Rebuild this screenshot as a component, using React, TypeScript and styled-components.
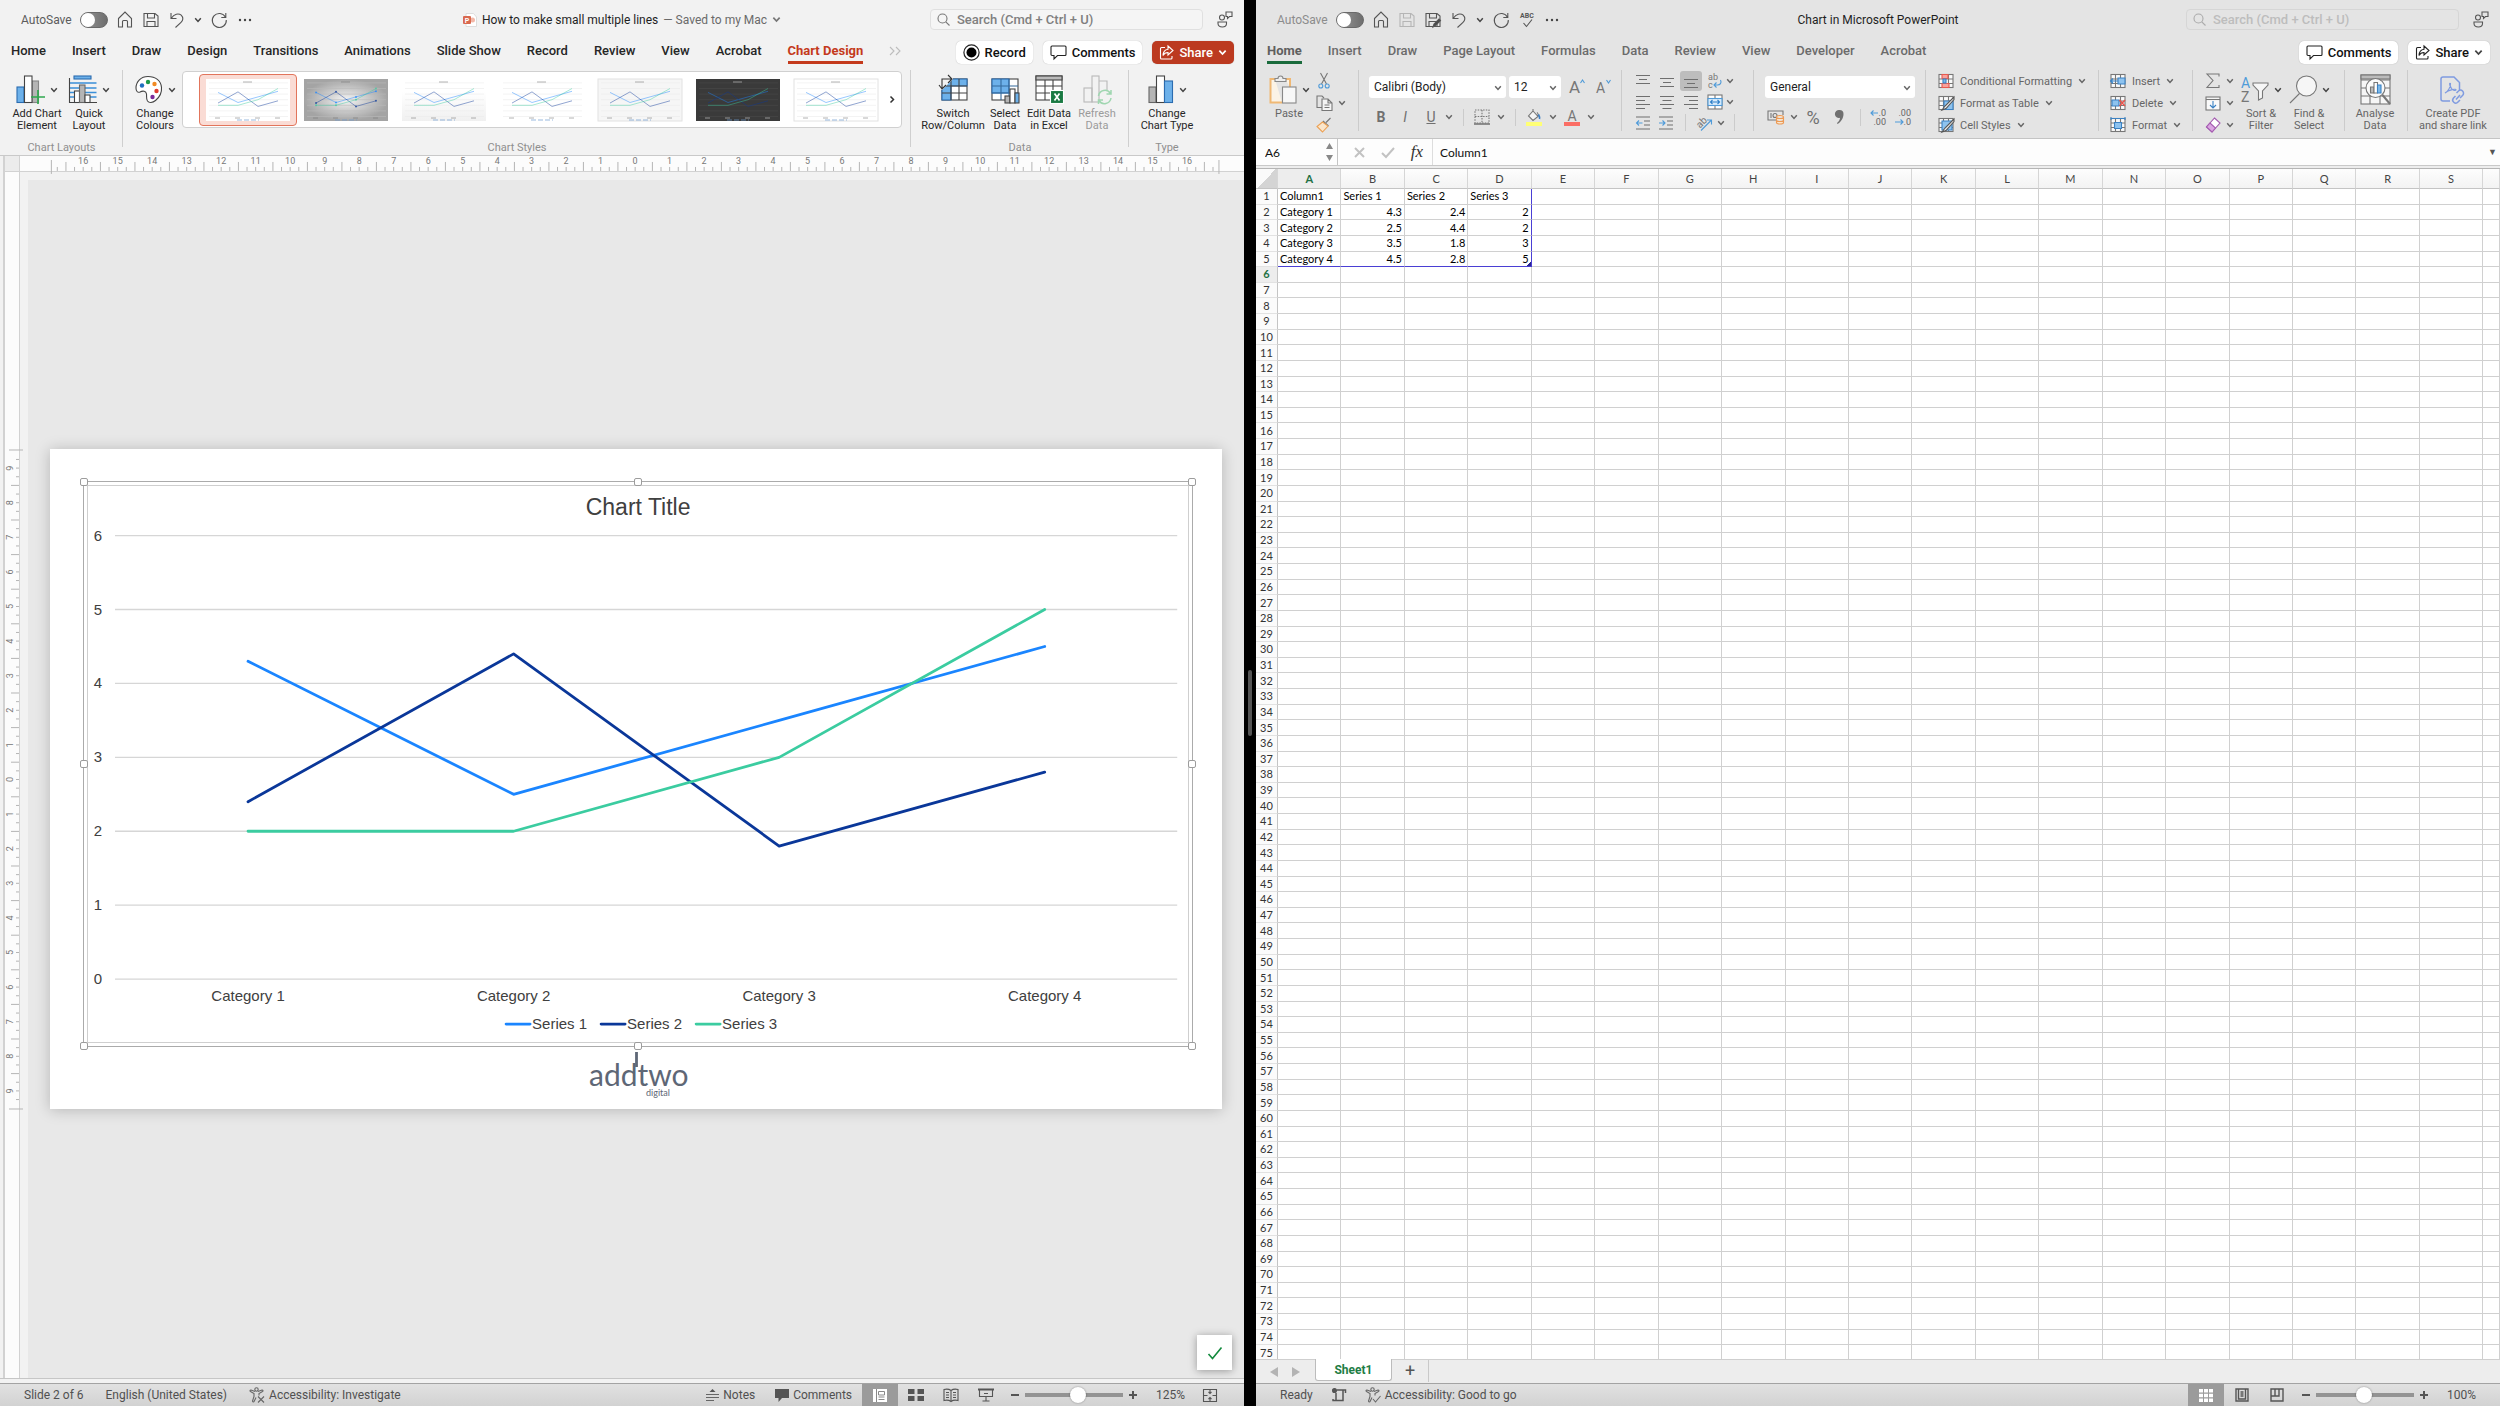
import React from 'react';
import styled, { createGlobalStyle, css } from 'styled-components';

const UI = `Roboto, "Liberation Sans", sans-serif`;
const SHEET = `Lato, "Liberation Sans", sans-serif`;
const ARIAL = `"Liberation Sans", Arial, sans-serif`;

const GlobalStyle = createGlobalStyle`
  *, *::before, *::after { box-sizing: border-box; }
  html, body { margin: 0; padding: 0; background: #000; }
  body { font-family: ${UI}; font-size: 12px; color: #262626; }
  button, input, select { font: inherit; color: inherit; margin: 0; }
  button { background: none; border: 0; padding: 0; cursor: pointer; }
  svg { display: block; flex: none; overflow: visible; }
`;

/* ---------- data ---------- */

const SERIES = [
  { name: 'Series 1', color: '#1a85ff', values: [4.3, 2.5, 3.5, 4.5] },
  { name: 'Series 2', color: '#0a3799', values: [2.4, 4.4, 1.8, 2.8] },
  { name: 'Series 3', color: '#3bcca0', values: [2, 2, 3, 5] },
];
const CATEGORIES = ['Category 1', 'Category 2', 'Category 3', 'Category 4'];
const COLUMNS = 'ABCDEFGHIJKLMNOPQRS'.split('');
const ROW_COUNT = 75;

const cellAt = (row: number, col: number): string => {
  if (row === 1) return ['Column1', ...SERIES.map((s) => s.name)][col] ?? '';
  if (row > 5 || col > 3) return '';
  return col === 0 ? CATEGORIES[row - 2] : String(SERIES[col - 1].values[row - 2]);
};

/* ---------- shared parts ---------- */

const Screen = styled.div`
  display: grid;
  grid-template-columns: minmax(0, 1fr) 12px minmax(0, 1fr);
  height: 100vh;
`;

const Divider = styled.div`
  display: flex;
  align-items: center;
  justify-content: center;
  background: #000;
  &::after { content: ''; width: 4px; height: 66px; border-radius: 2px; background: #555; }
`;

const Pane = styled.section<{ $bg: string }>`
  display: flex;
  flex-direction: column;
  min-height: 0;
  overflow: hidden;
  background: ${(p) => p.$bg};
`;

const TitleBar = styled.header`
  display: grid;
  grid-template-columns: 1fr auto 1fr;
  align-items: center;
  height: 39px;
  padding: 0 11px;
`;

const QuickAccess = styled.div`
  display: flex;
  align-items: center;
  gap: 9px;
  padding-left: 10px;
`;

const AutoSave = styled.label<{ $dim?: boolean }>`
  display: flex;
  align-items: center;
  gap: 8px;
  color: ${(p) => (p.$dim ? '#8c8c8c' : '#5c5c5c')};
`;

const Toggle = styled.input`
  appearance: none;
  width: 28px;
  height: 16px;
  border: 1px solid #6a6a6a;
  border-radius: 8px;
  background: linear-gradient(90deg, #9a9a9a, #6e6e6e);
  &::before {
    content: '';
    display: block;
    width: 14px;
    height: 14px;
    border-radius: 50%;
    background: #fff;
  }
`;

const Plain = styled.button<{ $w?: number; $h?: number; $on?: boolean }>`
  display: flex;
  align-items: center;
  justify-content: center;
  flex: none;
  width: ${(p) => (p.$w ? `${p.$w}px` : 'auto')};
  height: ${(p) => p.$h ?? 20}px;
  border-radius: 3px;
  background: ${(p) => (p.$on ? '#bdbdbd' : 'none')};
`;

const DocTitle = styled.h1`
  display: flex;
  align-items: center;
  gap: 5px;
  margin: 0;
  font-size: 12px;
  font-weight: 400;
  color: #1f1f1f;
  span { color: #6a6a6a; }
`;

const TitleEnd = styled.div`
  display: flex;
  align-items: center;
  justify-content: flex-end;
  gap: 14px;
`;

const SearchBox = styled.label<{ $dim?: boolean }>`
  display: flex;
  align-items: center;
  gap: 7px;
  width: 273px;
  height: 21px;
  padding: 0 6px;
  border: 1px solid ${(p) => (p.$dim ? '#d6d6d6' : '#e0e0e0')};
  border-radius: 4px;
  background: ${(p) => (p.$dim ? '#e4e4e4' : '#f5f5f5')};
  input {
    flex: 1;
    min-width: 0;
    padding: 0;
    border: 0;
    outline: 0;
    background: none;
    font-size: 13px;
    font-weight: 500;
  }
  input::placeholder { color: ${(p) => (p.$dim ? '#bdbdbd' : '#808080')}; opacity: 1; }
`;

const TabRow = styled.nav`
  display: flex;
  justify-content: space-between;
  align-items: flex-start;
  height: 31px;
  padding: 0 10px 0 11px;
`;

const Tabs = styled.div`
  display: flex;
  gap: 26px;
  padding-top: 1px;
`;

const Tab = styled.button<{ $active?: string; $dim?: boolean }>`
  height: 24px;
  border-bottom: 3px solid transparent;
  font-size: 13px;
  font-weight: 500;
  line-height: 21px;
  white-space: nowrap;
  color: ${(p) => (p.$dim ? '#6b6b6b' : '#262626')};
  ${(p) =>
    p.$active &&
    css`
      font-weight: 700;
      border-bottom-color: ${p.$active};
      color: ${p.$dim ? '#5f5f5f' : p.$active};
    `}
`;

const Actions = styled.div`
  display: flex;
  gap: 10px;
  padding-top: 2px;
`;

const Action = styled.button<{ $primary?: boolean }>`
  display: flex;
  align-items: center;
  gap: 5px;
  height: 23px;
  padding: 0 7px;
  border-radius: 5px;
  font-size: 13px;
  font-weight: 500;
  background: ${(p) => (p.$primary ? '#bc3a20' : '#fff')};
  color: ${(p) => (p.$primary ? '#fff' : '#111')};
  box-shadow: 0 0 1px rgba(0, 0, 0, 0.3);
`;

const Big = styled.button<{ $w: number; $color?: string }>`
  display: flex;
  flex-direction: column;
  align-items: center;
  gap: 4px;
  flex: none;
  width: ${(p) => p.$w}px;
  padding-top: 5px;
  font-size: 11px;
  line-height: 12px;
  white-space: nowrap;
  color: ${(p) => p.$color ?? '#262626'};
`;

const BigArt = styled.span`
  display: flex;
  align-items: center;
  justify-content: center;
  gap: 5px;
  height: 29px;
`;

/* ---------- icons ---------- */

type Art = { w: number; h: number; children: React.ReactNode; stroke?: string };
const Ico = ({ w, h, children, stroke = '#555' }: Art) => (
  <svg width={w} height={h} viewBox={`0 0 ${w} ${h}`} fill="none" stroke={stroke} strokeWidth="1.1" aria-hidden="true">
    {children}
  </svg>
);

const Chevron = ({ c = '#444', w = 8 }: { c?: string; w?: number }) => (
  <svg width={w} height={w - 2} viewBox="0 0 8 6" fill="none" stroke={c} strokeWidth="1.5" aria-hidden="true">
    <path d="M1.2 1.3 4 4.4 6.8 1.3" />
  </svg>
);

const HomeIcon = () => (
  <Ico w={16} h={17}>
    <path d="M1.5 7.5 8 1l6.500 6.500V16H10.500V10.500a1 1 0 0 0-1-1h-3a1 1 0 0 0-1 1V16h-4z" />
  </Ico>
);
const SaveIcon = ({ c = '#555', pen = false }: { c?: string; pen?: boolean }) => (
  <Ico w={16} h={16} stroke={c}>
    <path d="M1 1.500h11L15 4v10.500H1zM4.500 1.500v4.500h7V1.500M4 14.500V9.500h8v5" />
    {pen && <path d="M8 15l1-3 5-5 1.500 1.500-5 5z" fill="#444" />}
  </Ico>
);
const UndoIcon = () => (
  <Ico w={14} h={16}>
    <path d="M1 1v5.500h5.500M1.500 6C4 2 8.500.8 11.200 3.200c2.600 2.500 1.800 5.300-.2 7.200L5.500 15.500" />
  </Ico>
);
const RedoIcon = () => (
  <Ico w={17} h={16}>
    <path d="M14.800 1v4.500h-4.500M14.500 5.200A7 7 0 1 0 15.300 8" />
  </Ico>
);
const Dots = () => (
  <svg width="14" height="4" viewBox="0 0 14 4" fill="#444" aria-hidden="true">
    <circle cx="2" cy="2" r="1.200" /><circle cx="7" cy="2" r="1.200" /><circle cx="12" cy="2" r="1.200" />
  </svg>
);
const SpellIcon = () => (
  <Ico w={16} h={16}>
    <text x="8" y="6" textAnchor="middle" fontSize="7" fontWeight="700" fontFamily={UI} fill="#555" stroke="none">ABC</text>
    <path d="M4.500 11l3 3.500L13 7.500" />
  </Ico>
);
const SearchIcon = ({ c = '#777' }: { c?: string }) => (
  <Ico w={13} h={13} stroke={c}><circle cx="5.500" cy="5.500" r="4.500" /><path d="M8.800 8.800 12.500 12.500" /></Ico>
);
const PersonIcon = () => (
  <Ico w={16} h={17}>
    <circle cx="5" cy="6.500" r="2.500" />
    <path d="M1 11h8.500v1.500c0 2.300-1.700 3.500-4.200 3.500S1 14.800 1 12.500z" />
    <path d="M9 1h6v4.500h-2.500L10.500 7.500V5.500H9z" />
  </Ico>
);
const CommentIcon = () => (
  <Ico w={17} h={15} stroke="#222"><path d="M2 1h13a1 1 0 0 1 1 1v7.500a1 1 0 0 1-1 1H7.500L4 14v-3.500H2a1 1 0 0 1-1-1V2a1 1 0 0 1 1-1z" /></Ico>
);
const ShareIcon = ({ c }: { c: string }) => (
  <Ico w={15} h={15} stroke={c}>
    <path d="M6 2.500H2.500a1 1 0 0 0-1 1V13a1 1 0 0 0 1 1H12a1 1 0 0 0 1-1v-2" />
    <path d="M9 1l5 4.500-5 4.500V7.500C6.500 7.500 5 8.500 4 10.500c.2-4 2.200-6 5-6.300z" />
  </Ico>
);
const RecordIcon = () => (
  <svg width="17" height="17" viewBox="0 0 17 17" aria-hidden="true">
    <circle cx="8.500" cy="8.500" r="7.600" fill="none" stroke="#222" strokeWidth="1.200" /><circle cx="8.500" cy="8.500" r="5" fill="#000" />
  </svg>
);
const PptFile = () => (
  <svg width="14" height="14" viewBox="0 0 14 14" aria-hidden="true">
    <path d="M3 .5h7.500L13.500 4v9.500H3z" fill="#fff" stroke="#ddd" />
    <circle cx="9.500" cy="7" r="2.500" fill="#f2b8a8" /><rect x="0" y="3" width="8" height="8" rx="1" fill="#d9694f" />
    <text x="4" y="9.500" textAnchor="middle" fontSize="7" fontWeight="700" fontFamily={UI} fill="#fff">P</text>
  </svg>
);

const AddChartArt = () => (
  <Ico w={29} h={29}>
    <rect x="1" y="12" width="7" height="15.500" fill="#6db1ea" stroke="#2b6cb0" />
    <rect x="16" y="6" width="6.500" height="21.500" fill="#b5b5b5" stroke="#888" />
    <rect x="8.500" y="1" width="7.500" height="26.500" fill="#fff" stroke="#444" />
    <path d="M22 15v14M15 22h14" stroke="#2fa84f" strokeWidth="1.700" />
  </Ico>
);
const QuickLayoutArt = () => (
  <Ico w={29} h={29}>
    <rect x="6" y="1" width="17" height="3" fill="#6db1ea" stroke="#2b6cb0" />
    <path d="M1.500 8h27M1.500 13h27M1.500 17.500h27M1.500 22h27" stroke="#3a8fd8" strokeWidth="1.400" />
    <path d="M1.500 3v24.500H29" stroke="#444" />
    <rect x="6.500" y="16" width="5" height="11.500" fill="#fff" stroke="#444" />
    <rect x="11.500" y="10" width="5.500" height="17.500" fill="#b5b5b5" stroke="#666" />
    <rect x="17" y="20" width="5" height="7.500" fill="#fff" stroke="#444" />
  </Ico>
);
const PaletteArt = () => (
  <Ico w={28} h={29} stroke="#444">
    <path d="M13 1.500C6 1.500 1 6.500 1 13c0 3 1.500 5 4 4 3-1.500 6-1 6.500 2 .3 3-.5 4.500 1 7 1.500 2 5 2 8-.5 4-3.300 6.500-7.500 6-13C26 5.500 20.500 1.500 13 1.500z" fill="#fff" />
    <g stroke="none">
      <circle cx="7" cy="10.500" r="2.200" fill="#1f6fc0" /><circle cx="13" cy="7" r="2.200" fill="#1d9a4b" />
      <circle cx="19.500" cy="9" r="2.200" fill="#f08a24" /><circle cx="21.500" cy="16" r="2.200" fill="#e03c31" />
      <circle cx="17.500" cy="22" r="2.200" fill="#7b2a9b" />
    </g>
  </Ico>
);
const SwitchArt = () => (
  <Ico w={29} h={29} stroke="#444">
    <rect x="3" y="4" width="25" height="21" fill="#fff" />
    <path d="M3 4h25v7H12v14H3z" fill="#6db1ea" stroke="#2b6cb0" />
    <path d="M3 11h25M3 18h25M12 4v21M20 4v21" />
    <path d="M0 14V1H14V4L3 15z" fill="#f2f2f2" stroke="none" />
    <path d="M3 13V4h9M9 0l4 4-4 4M0 10l3 4 4-4" stroke="#333" />
  </Ico>
);
const SelectArt = () => (
  <Ico w={29} h={29} stroke="#444">
    <rect x="1" y="4" width="26" height="21" fill="#fff" />
    <rect x="1" y="4" width="17" height="14" fill="#6db1ea" stroke="#2b6cb0" />
    <path d="M1 11h26M1 18h26M10 4v21M18 4v21" stroke="#356a9c" />
    <rect x="14" y="21" width="5" height="7" fill="#b5b5b5" /><rect x="19" y="14" width="5" height="14" fill="#fff" /><rect x="24" y="18" width="4" height="10" fill="#6db1ea" />
  </Ico>
);
const EditExcelArt = () => (
  <Ico w={29} h={29} stroke="#444">
    <rect x="1" y="1" width="26" height="24" fill="#fff" /><rect x="1" y="1" width="26" height="4" fill="#bbb" />
    <path d="M1 11h26M1 18h26M10 5v20M18 5v20" />
    <rect x="15.500" y="15.500" width="13" height="13" fill="#1a7a43" stroke="#fff" />
    <path d="M19.500 18.500l5 7M24.500 18.500l-5 7" stroke="#fff" strokeWidth="1.700" />
  </Ico>
);
const RefreshArt = () => (
  <Ico w={29} h={29} stroke="#b9b9b9">
    <rect x="1" y="13" width="8" height="14" /><rect x="9" y="1" width="7" height="26" /><path d="M16 6h8v9" />
    <path d="M15.500 21a6.500 6.500 0 0 1 12-2.500M28 15v4h-4.500M28 23a6.500 6.500 0 0 1-12 2.500M15.500 29v-4H20" stroke="#9fd6b0" strokeWidth="1.500" />
  </Ico>
);
const ChartTypeArt = () => (
  <Ico w={26} h={29}>
    <rect x="1" y="12" width="7" height="15.500" fill="#b5b5b5" stroke="#666" />
    <rect x="8.500" y="1" width="8" height="26.500" fill="#fff" stroke="#444" />
    <rect x="16.500" y="6" width="8" height="21.500" fill="#6db1ea" stroke="#2b6cb0" />
  </Ico>
);

const PasteArt = () => (
  <Ico w={28} h={29} stroke="#888">
    <path d="M6 4H1.500v23.500H13M16 4h5v8" stroke="#f0b873" strokeWidth="2" fill="#fbf3e6" />
    <path d="M6 6.500V3.500h3a2.500 2.500 0 0 1 5 0h3v3z" fill="#eee" />
    <rect x="13.500" y="12" width="13.500" height="16" fill="#f7f7f7" />
  </Ico>
);
const CutIcon = () => (
  <Ico w={16} h={16} stroke="#777"><path d="M4.500 0l6 11M11.500 0l-6 11" /><g stroke="#4f9bd9"><circle cx="4.800" cy="13" r="2" /><circle cx="11.200" cy="13" r="2" /></g></Ico>
);
const CopyIcon = () => (
  <Ico w={17} h={16} stroke="#777">
    <path d="M6 12.500H1V1h5l2 2" /><path d="M6 4h6l4 4v7.500H6zM12 4v4h4M8.500 10h5M8.500 12.500h5" fill="#f4f4f4" />
  </Ico>
);
const BrushIcon = () => (
  <Ico w={16} h={16} stroke="#777"><path d="M14.500 1L10 5.500M7 4l5.500 5" /><path d="M6.500 5L1 9.500l5.500 5.500L12 9z" stroke="#eca154" fill="#fbe6cb" /></Ico>
);
const GrowIcon = ({ up }: { up?: boolean }) => (
  <Ico w={18} h={18} stroke="#4f9bd9">
    <text x="1" y="15" fontSize={up ? 17 : 14} fontFamily={UI} fill="#777" stroke="none">A</text>
    <path d={up ? 'M12.500 5l2-3 2 3' : 'M11.500 2l2 3 2-3'} />
  </Ico>
);
const BordersIcon = () => (
  <Ico w={16} h={16} stroke="#777"><path d="M1 1h14v13H1zM8 1v13M1 7.500h14" strokeDasharray="1.500 1.200" /><path d="M0 15h16" strokeWidth="1.600" /></Ico>
);
const FillIcon = () => (
  <Ico w={16} h={17} stroke="#777">
    <path d="M7 2l5 5.500-5 4-4.500-4.500zM7 2V0M12 7c1-2-.5-3-1-3.500" fill="#f4f4f4" /><path d="M12.500 5.500c1 1.800 1.500 3 1 4.500" stroke="#3b7ec4" strokeWidth="1.600" />
    <rect x="0" y="13" width="16" height="4" fill="#ffff76" stroke="none" />
  </Ico>
);
const FontColorIcon = () => (
  <Ico w={16} h={17}>
    <text x="8" y="11.500" textAnchor="middle" fontSize="14" fontFamily={UI} fill="#777" stroke="none">A</text>
    <rect x="0" y="13" width="16" height="4" fill="#fb6e65" stroke="none" />
  </Ico>
);
const Lines = ({ d }: { d: string }) => <Ico w={14} h={16} stroke="#6f6f6f"><path d={d} /></Ico>;
const WrapIcon = () => (
  <Ico w={16} h={16} stroke="#4f9bd9">
    <g fontSize="9" fontFamily={UI} fill="#777" stroke="none"><text x="1" y="7">ab</text><text x="1" y="15">c</text></g>
    <path d="M13.500 7c1.500 3-.5 5-3 5H7M9.500 9.500L7 12l2.500 2.500" />
  </Ico>
);
const MergeIcon = () => (
  <Ico w={16} h={16} stroke="#777">
    <rect x="1" y="1" width="14" height="14" fill="#fff" /><path d="M8 1v14" /><rect x="1" y="4.500" width="14" height="7" fill="#d8ebfa" stroke="#4f9bd9" />
    <path d="M4 8h8M5.500 6L3.500 8l2 2M10.500 6l2 2-2 2" stroke="#2f80c9" />
  </Ico>
);
const IndentIcon = ({ out }: { out?: boolean }) => (
  <Ico w={14} h={16} stroke="#6f6f6f">
    <path d="M0 2h14M8 6h6M8 10h6M0 14h14" /><path d={out ? 'M6.500 8h-6M3 5.500L.5 8 3 10.500' : 'M0 8h6M3.500 5.500L6 8l-2.500 2.500'} stroke="#4f9bd9" />
  </Ico>
);
const OrientIcon = () => (
  <Ico w={18} h={18} stroke="#4f9bd9">
    <text x="1" y="13" transform="rotate(-45 5 9)" fontSize="10" fontFamily={UI} fill="#777" stroke="none">ab</text>
    <path d="M6 16.500L16 6.500M12 6h4.500v4.500" />
  </Ico>
);
const MoneyIcon = () => (
  <Ico w={18} h={16} stroke="#777">
    <path d="M10 11H1V2h15v4" /><circle cx="8" cy="6.500" r="2" /><path d="M4 4v5" />
    <path d="M9.500 8c0-2 7-2 7 0v5.500c0 2-7 2-7 0zM9.500 8c0 2 7 2 7 0M9.500 11c0 2 7 2 7 0" stroke="#ec9a56" fill="#fbe6cb" />
  </Ico>
);
const DecimalIcon = ({ inc }: { inc?: boolean }) => (
  <Ico w={17} h={17} stroke="#4f9bd9">
    <g fontSize="9" fontFamily={UI} fill="#666" stroke="none">
      <text x="16" y="7" textAnchor="end">{inc ? '.0' : '.00'}</text><text x="16" y="16" textAnchor="end">{inc ? '.00' : '.0'}</text>
    </g>
    <path d={inc ? 'M8 4H1M3.500 1.500L1 4l2.500 2.500' : 'M0 13h8M5.500 10.500L8 13l-2.500 2.500'} />
  </Ico>
);
const GridIcon = ({ kind }: { kind: string }) => (
  <Ico w={16} h={16} stroke="#777">
    <rect x="1" y="1.500" width="14" height="13" fill="#fafafa" /><path d="M5.500 1.500v13M10.500 1.500v13M1 6h14M1 10.500h14" />
    {kind === 'cond' && <path d="M4 1.500h6v4H4zM4 10.500h7v4H4z" fill="#f7a29c" stroke="#ea5a50" />}
    {kind === 'cond' && <rect x="5" y="6" width="3" height="4" fill="#7db9ea" stroke="#3b82c4" />}
    {kind === 'table' && <path d="M6 6h9v8.500H6z" fill="#8ec3ef" stroke="#3b82c4" />}
    {kind === 'styles' && <path d="M4 4h10v9H4z" fill="#8ec3ef" stroke="#3b82c4" />}
    {(kind === 'table' || kind === 'styles') && <path d="M16 2L7 11l-3 4 4-1.500 8-9z" fill="#eee" stroke="#555" />}
    {kind === 'insert' && <path d="M8 5h7v6H8zM8 8H0M3 5.500L.5 8 3 10.500" fill="#8ec3ef" stroke="#3b82c4" />}
    {kind === 'delete' && <path d="M2 5h7v6H2z" fill="#8ec3ef" stroke="#3b82c4" />}
    {kind === 'delete' && <path d="M9.500 5l5.500 6M15 5l-5.500 6" stroke="#e8534a" strokeWidth="1.400" />}
    {kind === 'format' && <path d="M4.500 5.500h7v6h-7zM1 0v3M15 0v3M1 1.500h14" fill="#8ec3ef" stroke="#3b82c4" />}
  </Ico>
);
const SumIcon = () => <Ico w={16} h={16} stroke="#777"><path d="M14 3.500V1H2l6 6.500L2 14.500h12V12" /></Ico>;
const FillDownIcon = () => (
  <Ico w={16} h={15} stroke="#777"><rect x="1" y="1" width="14" height="13" fill="#fafafa" /><path d="M1 3.500h14" /><path d="M8 5v7M5 9l3 3 3-3" stroke="#3b82c4" /></Ico>
);
const EraserIcon = () => (
  <Ico w={16} h={16} stroke="#a45bb0"><path d="M9.500 1L15 6l-8 9-5.500-5z" fill="#fff" /><path d="M5 6l5.500 5L7 15 1.500 10z" fill="#dba6e2" /></Ico>
);
const SortArt = () => (
  <Ico w={28} h={28} stroke="#777">
    <g fontSize="14" fontFamily={UI} stroke="none"><text x="0" y="12" fill="#4f9bd9">A</text><text x="0" y="26" fill="#777">Z</text></g>
    <path d="M12 7h15v2l-5.500 6v7l-4 2v-9L12 9z" fill="#f6f6f6" />
  </Ico>
);
const FindArt = () => <Ico w={28} h={29} stroke="#777"><circle cx="17.500" cy="11" r="10" fill="#f6f6f6" /><path d="M10.500 18.500L1 28" /></Ico>;
const AnalyseArt = () => (
  <Ico w={31} h={31} stroke="#777">
    <rect x="1" y="1" width="29" height="29" fill="#f6f6f6" /><path d="M1 6h29M1 14h29M1 22h29M10 6v24M20 6v24" /><rect x="1" y="1" width="29" height="4" fill="#bbb" />
    <circle cx="15.500" cy="14" r="9.500" fill="#fafafa" /><path d="M22.500 21L30 30" strokeWidth="2" />
    <path d="M10.500 13h3.500v6h-3.500z" fill="#bbb" /><path d="M14 8.500h3.500V19H14z" fill="#fff" /><path d="M17.500 11H21v8h-3.500z" fill="#7db9ea" stroke="#3b82c4" />
  </Ico>
);
const PdfArt = () => (
  <Ico w={26} h={28} stroke="#7f9be0">
    <path d="M10 25H3a2 2 0 0 1-2-2V3a2 2 0 0 1 2-2h11l5.500 5.500V14" strokeWidth="1.500" />
    <path d="M5 17c3-1 6-7 5.500-9.500-1.500-1.500-1 3 1 5 1.500 2 4 2.500 4.500 1.500.5-1.500-7-.5-11 3z" />
    <path d="M15.500 20l-2 2a3 3 0 0 0 4.500 4l2-2M20 22l2.500-2.500a3 3 0 0 0-4-4.500l-2 2M16 23.500l4-4.500" strokeWidth="1.500" />
  </Ico>
);

const A11yIcon = ({ ok }: { ok?: boolean }) => (
  <Ico w={16} h={16} stroke="#666">
    <circle cx="7.500" cy="2.500" r="1.700" />
    <path d="M6 4.500L2 3c-1.200 0-1.300 1-.5 1.500L5 6.500v3L3.500 14c0 1.200 1.300 1.200 1.700.3L7 10.500M9 4.500l4-1.500c1.200 0 1.300 1 .5 1.500L10 6.500v2" />
    <path d={ok ? 'M8 12l2.500 3L15.500 9' : 'M9 9.500l6 6M15 9.500l-6 6'} />
  </Ico>
);

/* ---------- ribbon of the slides window ---------- */

const SlideRibbon = styled.div`
  display: flex;
  height: 86px;
  padding-right: 39px;
  border-bottom: 1px solid #c9c9c9;
`;

const Group = styled.div<{ $w?: number; $last?: boolean }>`
  display: flex;
  flex-direction: column;
  justify-content: space-between;
  flex: ${(p) => (p.$w ? 'none' : '1')};
  width: ${(p) => (p.$w ? `${p.$w}px` : 'auto')};
  min-width: 0;
  background: ${(p) => (p.$last ? 'none' : 'linear-gradient(#cfcfcf, #cfcfcf) right top / 1px 77px no-repeat')};
`;

const GroupItems = styled.div<{ $pad: number }>`
  display: flex;
  padding: 0 ${(p) => p.$pad}px;
`;

const GroupName = styled.div`
  text-align: center;
  font-size: 11px;
  line-height: 15px;
  color: #8f8f8f;
`;

const Gallery = styled.div`
  display: flex;
  align-items: center;
  flex: 1;
  height: 57px;
  margin: 1px 0 0 4px;
  padding-left: 16px;
  border: 1px solid #d0d0d0;
  border-radius: 4px;
  background: #fff;
`;

const ThumbButton = styled.button<{ $on?: boolean }>`
  display: flex;
  align-items: center;
  justify-content: center;
  width: 98px;
  height: 52px;
  border-radius: 4px;
  ${(p) => p.$on && css`
    border: 1px solid #e2755c;
    background: #fadcd5;
  `}
`;

const THUMBS = [
  { bg: '#fff' },
  { bg: 'radial' },
  { bg: 'fade' },
  { bg: '#fff' },
  { bg: '#f6f6f6' },
  { bg: '#3a3a3a' },
  { bg: '#fff', frame: true },
];

const Thumb = ({ bg, frame }: { bg: string; frame?: boolean }) => {
  const dark = bg === '#3a3a3a';
  const metal = bg === 'radial';
  const fill = metal ? 'url(#thumbRadial)' : bg === 'fade' ? 'url(#thumbFade)' : bg;
  const ink = dark ? '#ddd' : '#777';
  return (
    <svg width="84" height="42" viewBox="0 0 84 42" aria-hidden="true">
      <defs>
        <radialGradient id="thumbRadial"><stop offset="0" stopColor="#f4f4f4" /><stop offset="1" stopColor="#a4a4a4" /></radialGradient>
        <linearGradient id="thumbFade" x2="0" y2="1"><stop offset="0.3" stopColor="#fff" /><stop offset="1" stopColor="#f0f0f0" /></linearGradient>
      </defs>
      <rect width="84" height="42" fill={fill} stroke={frame || bg === '#f6f6f6' ? '#e2e2e2' : 'none'} />
      {[0, 1, 2, 3, 4, 5, 6].map((v) => (
        <path key={v} d={`M3 ${37.5 - v * 5.6}H82`} stroke={dark ? '#4a4a4a' : metal ? '#b8b8b8' : '#ebebeb'} strokeWidth="0.600" />
      ))}
      {SERIES.map((s) => (
        <polyline key={s.name} fill="none" stroke={s.color} strokeWidth="0.900" opacity="0.500"
          points={s.values.map((v, i) => `${12 + i * 20},${37.5 - v * 5.6}`).join(' ')} />
      ))}
      {metal && SERIES.map((s) => s.values.map((v, i) => (
        <circle key={s.name + i} cx={12 + i * 20} cy={37.5 - v * 5.6} r="1" fill={s.color} opacity="0.700" />
      )))}
      <path d="M37 3h9M9 39h5M29 39h5M49 39h5M69 39h5" stroke={ink} strokeWidth="0.800" opacity="0.700" />
      <path d="M31 41h22" stroke="#6d9bd0" strokeWidth="0.700" strokeDasharray="5 2" />
    </svg>
  );
};

/* ---------- slide work area ---------- */

const WorkArea = styled.main`
  position: relative;
  display: grid;
  grid-template-columns: 3px 17px 8px minmax(0, 1fr);
  grid-template-rows: 16px 8px minmax(0, 1fr);
  flex: 1;
  min-height: 0;
  border-bottom: 1px solid #c6c6c6;
`;

const RulerCorner = styled.div`
  grid-area: 1 / 2;
  border: solid #d2d2d2;
  border-width: 0 1px 1px 2px;
  background: #ececec;
`;

const TopRuler = styled.div`
  grid-area: 1 / 3 / 3 / 5;
  display: flex;
  justify-content: center;
  padding-left: 7px;
  background: linear-gradient(#fcfcfc 15px, #d2d2d2 15px, #d2d2d2 16px, #f2f2f2 16px);
  svg { width: 96%; height: auto; align-self: flex-start; }
`;

const SideRuler = styled.div`
  grid-area: 2 / 2 / 4 / 3;
  display: flex;
  align-items: center;
  padding-top: 8px;
  border: solid #d2d2d2;
  border-width: 0 1px 0 2px;
  background: #fcfcfc;
`;

const Canvas = styled.div`
  grid-area: 3 / 4;
  display: flex;
  align-items: center;
  justify-content: center;
  min-height: 0;
  background: #e8e8e8;
`;

const Slide = styled.article`
  display: flex;
  flex-direction: column;
  align-items: center;
  width: 96.4%;
  aspect-ratio: 16 / 9;
  padding: 32px 29px 0 33px;
  background: #fff;
  box-shadow: 0 1px 14px rgba(0, 0, 0, 0.22);
`;

const ChartFrame = styled.figure`
  position: relative;
  width: 100%;
  margin: 0;
  padding: 3px;
  border: 1px solid #ababab;
  svg { width: 100%; height: auto; border: 1px solid #cfcfcf; }
`;

const Handle = styled.i<{ $x: number; $y: number }>`
  position: absolute;
  left: ${(p) => p.$x}%;
  top: ${(p) => p.$y}%;
  width: 8px;
  height: 8px;
  margin: -4px;
  border: 1px solid #9c9c9c;
  border-radius: 2px;
  background: #fff;
`;

const HANDLES = [[0, 0], [50, 0], [100, 0], [0, 50], [100, 50], [0, 100], [50, 100], [100, 100]];

const ReadyCheck = styled.button`
  position: absolute;
  right: 12px;
  bottom: 8px;
  display: grid;
  place-items: center;
  width: 35px;
  height: 35px;
  background: #fff;
  box-shadow: 0 1px 8px rgba(0, 0, 0, 0.35);
`;

const LineChart = () => {
  const x = (i: number) => 160 + i * 265.5;
  const y = (v: number) => 493 - v * 73.9;
  return (
    <svg viewBox="0 0 1100 556" fontFamily={ARIAL} fontSize="15" fill="#404040" role="img" aria-label="Chart Title">
      <text x="550" y="29" textAnchor="middle" fontSize="23">Chart Title</text>
      {[0, 1, 2, 3, 4, 5, 6].map((v) => (
        <g key={v}>
          <path d={`M27 ${y(v)}H1089`} stroke="#d6d6d6" strokeWidth="1.300" />
          <text x="14" y={y(v) + 5} textAnchor="end">{v}</text>
        </g>
      ))}
      {SERIES.map((s) => (
        <polyline key={s.name} fill="none" stroke={s.color} strokeWidth="2.800" strokeLinecap="round" strokeLinejoin="round"
          points={s.values.map((v, i) => `${x(i)},${y(v)}`).join(' ')} />
      ))}
      {CATEGORIES.map((c, i) => <text key={c} x={x(i)} y="515" textAnchor="middle">{c}</text>)}
      {SERIES.map((s, i) => (
        <g key={s.name}>
          <path d={`M${418 + i * 95} 538h24`} stroke={s.color} strokeWidth="2.800" strokeLinecap="round" />
          <text x={444 + i * 95} y="543">{s.name}</text>
        </g>
      ))}
    </svg>
  );
};

const Logo = () => (
  <svg width="98" height="52" viewBox="0 0 98 52" fontFamily={SHEET} fill="#5e6776" role="img" aria-label="addtwo digital">
    <text x="0" y="39" fontSize="30">addtwo</text>
    <path d="M47.500 5V20" stroke="#5e6776" strokeWidth="2.800" />
    <text x="57" y="49" fontSize="9">digital</text>
  </svg>
);

const UNIT = 34.6;
const HorizontalTicks = () => {
  const mid = 585.5;
  const quarters = Array.from({ length: 135 }, (_, i) => i - 67);
  return (
    <svg viewBox="0 0 1171 16" fontFamily={UI} fontSize="9" fill="#777" stroke="none" aria-hidden="true">
      {quarters.filter((q) => q % 4 !== 0).map((q) => (
        <path key={q} d={`M${mid + (q * UNIT) / 4} ${Math.abs(q) % 4 === 2 ? 6 : 11}V15`} stroke="#b5b5b5" />
      ))}
      {quarters.filter((q) => q % 4 === 0).map((q) => (
        <g key={q}>
          <text x={mid + (q / 4) * UNIT} y="8" textAnchor="middle">{Math.abs(q / 4)}</text>
          <path d={`M${mid + (q * UNIT) / 4} 11V15`} stroke="#b5b5b5" />
        </g>
      ))}
      <path d="M0 4V18M1171 4V18" stroke="#b5b5b5" />
    </svg>
  );
};

const VerticalTicks = () => {
  const mid = 329.5;
  const quarters = Array.from({ length: 75 }, (_, i) => i - 37);
  return (
    <svg width="14" height="659" viewBox="0 0 14 659" fontFamily={UI} fontSize="9" fill="#777" aria-hidden="true">
      {quarters.map((q) => (
        <path key={q} d={`M${Math.abs(q) % 4 === 2 ? 6 : 11} ${mid + (q * UNIT) / 4}H14`} stroke="#b5b5b5" />
      ))}
      {quarters.filter((q) => q % 4 === 0).map((q) => {
        const cy = mid + (q / 4) * UNIT;
        return <text key={q} x="5" y={cy + 3} textAnchor="middle" transform={`rotate(-90 5 ${cy})`}>{Math.abs(q / 4)}</text>;
      })}
      <path d="M4 0H18M4 659H18" stroke="#b5b5b5" />
    </svg>
  );
};

/* ---------- status bars ---------- */

const StatusBar = styled.footer<{ $top?: number }>`
  display: flex;
  flex: none;
  align-items: center;
  justify-content: space-between;
  height: 23px;
  margin-top: ${(p) => p.$top ?? 0}px;
  padding: 0 24px;
  border-top: 1px solid #a3a3a3;
  background: linear-gradient(#e1e1e1, #d2d2d2);
  color: #505050;
`;

const StatusSide = styled.div<{ $gap: number }>`
  display: flex;
  align-items: center;
  gap: ${(p) => p.$gap}px;
  height: 100%;
`;

const StatusItem = styled.button`
  display: flex;
  align-items: center;
  gap: 4px;
  white-space: nowrap;
`;

const ViewButton = styled.button<{ $on?: boolean }>`
  display: grid;
  place-items: center;
  width: ${(p) => (p.$on ? 36 : 35)}px;
  height: 100%;
  background: ${(p) => (p.$on ? '#9b9b9b' : 'none')};
`;

const Zoom = styled.div`
  display: flex;
  align-items: center;
  gap: 5px;
  input {
    appearance: none;
    width: 98px;
    height: 16px;
    background: linear-gradient(#939393, #939393) center / 100% 4px no-repeat;
  }
  input::-webkit-slider-thumb {
    appearance: none;
    width: 16px;
    height: 16px;
    border-radius: 50%;
    background: #fff;
    box-shadow: 0 0 2px rgba(0, 0, 0, 0.4);
  }
`;

const ZoomEnd = styled.div`
  display: flex;
  align-items: center;
  gap: 15px;
  padding-left: 7px;
`;

const Percent = styled.span`
  width: 32px;
  text-align: right;
`;

const Step = ({ plus, label }: { plus?: boolean; label: string }) => (
  <Plain $w={10} $h={16} aria-label={label}>
    <svg width="10" height="10" viewBox="0 0 10 10" stroke="#555" strokeWidth="2"><path d={plus ? 'M1 5h8M5 1v8' : 'M1 5h8'} /></svg>
  </Plain>
);

const ZoomControl = ({ value }: { value: number }) => (
  <Zoom>
    <Step label="Zoom out" />
    <input type="range" min={0} max={100} defaultValue={value} aria-label="Zoom" />
    <Step plus label="Zoom in" />
  </Zoom>
);

/* ---------- slides window ---------- */

const SLIDE_TABS = ['Home', 'Insert', 'Draw', 'Design', 'Transitions', 'Animations', 'Slide Show', 'Record', 'Review', 'View', 'Acrobat', 'Chart Design'];

const BigButton = ({ w, art, lines, chevron, color }: { w: number; art: React.ReactNode; lines: string[]; chevron?: boolean; color?: string }) => (
  <Big $w={w} $color={color}>
    <BigArt>{art}{chevron && <Chevron />}</BigArt>
    <span>{lines.map((l, i) => <React.Fragment key={l}>{i > 0 && <br />}{l}</React.Fragment>)}</span>
  </Big>
);

const SlidesWindow = () => (
  <Pane $bg="#f2f2f2">
    <TitleBar>
      <QuickAccess>
        <AutoSave>AutoSave<Toggle type="checkbox" /></AutoSave>
        <Plain $w={17} aria-label="Home"><HomeIcon /></Plain>
        <Plain $w={17} aria-label="Save"><SaveIcon /></Plain>
        <Plain $w={16} aria-label="Undo"><UndoIcon /></Plain>
        <Plain $w={8} aria-label="Undo history"><Chevron /></Plain>
        <Plain $w={17} aria-label="Redo"><RedoIcon /></Plain>
        <Plain $w={16} aria-label="More"><Dots /></Plain>
      </QuickAccess>
      <DocTitle><PptFile />How to make small multiple lines <span>— Saved to my Mac</span><Chevron c="#777" w={9} /></DocTitle>
      <TitleEnd>
        <SearchBox><SearchIcon /><input type="search" placeholder="Search (Cmd + Ctrl + U)" aria-label="Search" /></SearchBox>
        <Plain $w={16} aria-label="Account"><PersonIcon /></Plain>
      </TitleEnd>
    </TitleBar>
    <TabRow>
      <Tabs>
        {SLIDE_TABS.map((t) => <Tab key={t} $active={t === 'Chart Design' ? '#c43a1c' : undefined}>{t}</Tab>)}
        <Plain $w={12} $h={22} aria-label="More tabs"><Ico w={12} h={10} stroke="#bdbdbd"><path d="M1 1l4 4-4 4M7 1l4 4-4 4" /></Ico></Plain>
      </Tabs>
      <Actions>
        <Action><RecordIcon />Record</Action>
        <Action><CommentIcon />Comments</Action>
        <Action $primary><ShareIcon c="#fff" />Share<Chevron c="#fff" w={9} /></Action>
      </Actions>
    </TabRow>
    <SlideRibbon>
      <Group $w={123}>
        <GroupItems $pad={11}>
          <BigButton w={52} art={<AddChartArt />} lines={['Add Chart', 'Element']} chevron />
          <BigButton w={52} art={<QuickLayoutArt />} lines={['Quick', 'Layout']} chevron />
        </GroupItems>
        <GroupName>Chart Layouts</GroupName>
      </Group>
      <Group>
        <GroupItems $pad={9}>
          <BigButton w={46} art={<PaletteArt />} lines={['Change', 'Colours']} chevron />
          <Gallery>
            {THUMBS.map((t, i) => <ThumbButton key={i} $on={i === 0} aria-label={`Style ${i + 1}`}><Thumb {...t} /></ThumbButton>)}
            <Plain $w={14} aria-label="More styles"><Ico w={6} h={9} stroke="#333"><path d="M1.500 1.500l3 3-3 3" strokeWidth="1.500" /></Ico></Plain>
          </Gallery>
        </GroupItems>
        <GroupName>Chart Styles</GroupName>
      </Group>
      <Group $w={218}>
        <GroupItems $pad={9}>
          <BigButton w={66} art={<SwitchArt />} lines={['Switch', 'Row/Column']} />
          <BigButton w={38} art={<SelectArt />} lines={['Select', 'Data']} />
          <BigButton w={50} art={<EditExcelArt />} lines={['Edit Data', 'in Excel']} />
          <BigButton w={46} art={<RefreshArt />} lines={['Refresh', 'Data']} color="#9b9b9b" />
        </GroupItems>
        <GroupName>Data</GroupName>
      </Group>
      <Group $w={76} $last>
        <GroupItems $pad={9}>
          <BigButton w={58} art={<ChartTypeArt />} lines={['Change', 'Chart Type']} chevron />
        </GroupItems>
        <GroupName>Type</GroupName>
      </Group>
    </SlideRibbon>
    <WorkArea>
      <RulerCorner />
      <TopRuler><HorizontalTicks /></TopRuler>
      <SideRuler><VerticalTicks /></SideRuler>
      <Canvas>
        <Slide>
          <ChartFrame>
            <LineChart />
            {HANDLES.map(([x, y]) => <Handle key={`${x}-${y}`} $x={x} $y={y} />)}
          </ChartFrame>
          <Logo />
        </Slide>
      </Canvas>
      <ReadyCheck aria-label="Ready"><Ico w={16} h={14} stroke="#138a3d"><path d="M1.500 8l4 4.500L14.500 1.500" strokeWidth="1.600" /></Ico></ReadyCheck>
    </WorkArea>
    <StatusBar $top={4}>
      <StatusSide $gap={22}>
        <span>Slide 2 of 6</span>
        <StatusItem>English (United States)</StatusItem>
        <StatusItem><A11yIcon />Accessibility: Investigate</StatusItem>
      </StatusSide>
      <StatusSide $gap={10}>
        <StatusSide $gap={20}>
          <StatusItem><svg width="13" height="12" viewBox="0 0 13 12" stroke="#666"><path d="M0 5.500h13M0 8.500h13M0 11.500h8" /><path d="M3.500 3L6.500 0l3 3z" fill="#555" stroke="none" /></svg>Notes</StatusItem>
          <StatusItem><svg width="14" height="13" viewBox="0 0 14 13" fill="#555"><path d="M0 0h14v9H7l-3.500 4V9H0z" /></svg>Comments</StatusItem>
        </StatusSide>
        <StatusSide $gap={0}>
          <ViewButton $on aria-label="Normal view"><svg width="14" height="13" viewBox="0 0 14 13"><path d="M0 0h14v13H0z" fill="#fff" /><path d="M3.500 0v13M5.500 2.500h6v3.500h-6zM5.500 8h6M5.500 10.500h6" fill="none" stroke="#8a8a8a" /></svg></ViewButton>
          <ViewButton aria-label="Slide sorter"><svg width="16" height="12" viewBox="0 0 16 12" fill="#555"><path d="M0 0h6.500v5H0zM9.500 0H16v5H9.500zM0 7h6.500v5H0zM9.500 7H16v5H9.500z" /></svg></ViewButton>
          <ViewButton aria-label="Reading view"><Ico w={16} h={14}><path d="M8 2.500C6 1 3 1 1 1.500v11c2-.5 5-.5 7 1 2-1.500 5-1.500 7-1v-11c-2-.5-5-.5-7 1zM8 2.500v11M3 4.500h3M3 7h3M3 9.500h3M10 4.500h3M10 7h3M10 9.500h3" /></Ico></ViewButton>
          <ViewButton aria-label="Slide show"><Ico w={16} h={14}><path d="M0 1.500h16" strokeWidth="2" /><path d="M1.500 2v6.500h13V2M8 8.500V13M4.500 13h7M6 5.500h4" /></Ico></ViewButton>
          <ZoomEnd>
            <ZoomControl value={55} />
            <Percent>125%</Percent>
            <Plain $w={20} aria-label="Fit slide"><Ico w={14} h={13}><path d="M.5.5h13v12H.5zM7 .5v4M7 8.500v4M.5 6.500h4M9.500 6.500h4M5.500 3L7 4.500 8.500 3M5.500 10L7 8.500 8.500 10" /></Ico></Plain>
          </ZoomEnd>
        </StatusSide>
      </StatusSide>
    </StatusBar>
  </Pane>
);

/* ---------- workbook window ---------- */

const SheetRibbon = styled.div`
  display: flex;
  flex: none;
  height: 69px;
  border-bottom: 1px solid #c4c4c4;
`;

const SheetGroup = styled.div<{ $w?: number; $pad: number; $dir?: 'column' | 'row' }>`
  display: flex;
  flex: ${(p) => (p.$w ? 'none' : '1')};
  flex-direction: ${(p) => p.$dir ?? 'row'};
  width: ${(p) => (p.$w ? `${p.$w}px` : 'auto')};
  padding-left: ${(p) => p.$pad}px;
  color: #666;
  background: ${(p) => (p.$w ? 'linear-gradient(#cbcbcb, #cbcbcb) right top / 1px 61px no-repeat' : 'none')};
`;

const Stack = styled.div<{ $left?: number }>`
  display: flex;
  flex-direction: column;
  margin-left: ${(p) => p.$left ?? 0}px;
`;

const Row = styled.div<{ $gap?: number; $h?: number; $top?: number }>`
  display: flex;
  align-items: center;
  gap: ${(p) => p.$gap ?? 0}px;
  height: ${(p) => p.$h ?? 22}px;
  margin-top: ${(p) => p.$top ?? 0}px;
`;

const Rule = styled.i<{ $before: number; $after: number }>`
  flex: none;
  width: 1px;
  height: 17px;
  margin: 0 ${(p) => p.$after}px 0 ${(p) => p.$before}px;
  background: #cbcbcb;
`;

const LabelButton = styled.button`
  display: flex;
  align-items: center;
  gap: 6px;
  height: 22px;
  font-size: 11px;
  white-space: nowrap;
`;

const Glyph = styled.span<{ $size?: number; $style?: string }>`
  font-size: ${(p) => p.$size ?? 14}px;
  font-weight: ${(p) => (p.$style === 'bold' ? 700 : 400)};
  font-style: ${(p) => (p.$style === 'italic' ? 'italic' : 'normal')};
  text-decoration: ${(p) => (p.$style === 'underline' ? 'underline' : 'none')};
  color: #707070;
`;

const Picker = styled.div<{ $w: number }>`
  position: relative;
  width: ${(p) => p.$w}px;
  height: 22px;
  select {
    appearance: none;
    width: 100%;
    height: 100%;
    padding: 0 5px;
    border: 0;
    border-radius: 3px;
    background: #fff;
    font-size: 12px;
    color: #222;
  }
  svg { position: absolute; right: 4px; top: 9px; pointer-events: none; }
`;

const PickerField = ({ w, value, label }: { w: number; value: string; label: string }) => (
  <Picker $w={w}>
    <select defaultValue={value} aria-label={label}><option>{value}</option></select>
    <Chevron c="#666" />
  </Picker>
);

const FormulaBar = styled.div`
  display: flex;
  flex: none;
  height: 30px;
  border-bottom: 1px solid #b5b5b5;
  background: linear-gradient(#fdfdfd 26px, #c9c9c9 26px, #c9c9c9 27px, #ededed 27px);
  input {
    min-width: 0;
    border: 0;
    outline: 0;
    background: none;
    font-family: ${SHEET};
    font-size: 12px;
    color: #111;
  }
`;

const NameBox = styled.label`
  display: flex;
  align-items: center;
  width: 82px;
  height: 26px;
  padding: 0 3px 0 9px;
  border-right: 1px solid #c4c4c4;
  input { flex: 1; width: 0; padding: 0; }
`;

const FormulaTools = styled.div`
  display: flex;
  align-items: center;
  justify-content: space-between;
  width: 95px;
  height: 26px;
  padding: 0 8px 0 15px;
  border-right: 1px solid #ddd;
`;

const FormulaInput = styled.input`
  flex: 1;
  height: 26px;
  padding: 0 7px;
`;

const FxGlyph = styled.span`
  font: italic 17px "Liberation Serif", serif;
  color: #333;
`;

const DownMark = styled.span`
  align-self: flex-start;
  width: 12px;
  font-size: 9px;
  line-height: 26px;
  color: #555;
`;

const SheetArea = styled.div`
  flex: 1;
  min-height: 0;
  overflow: hidden;
  background: #fff;
`;

const Grid = styled.table`
  width: 100%;
  height: calc(100% + 2px);
  table-layout: fixed;
  border-collapse: separate;
  border-spacing: 0;
  font-family: ${SHEET};
  font-size: 11px;
  line-height: 14px;
  color: #000;
  col:first-child { width: 22px; }
  col.letter { width: 5.1%; }
`;

const Head = styled.th<{ $on?: boolean }>`
  height: 20px;
  padding: 0;
  border: solid #d6d6d6;
  border-width: 0 1px 1px 0;
  border-bottom-color: #c4c4c4;
  font-weight: ${(p) => (p.$on ? 700 : 400)};
  color: ${(p) => (p.$on ? '#1e7145' : '#444')};
  background: ${(p) => (p.$on ? '#ededed' : 'linear-gradient(#fdfdfd, #f3f3f3)')};
`;

const SelectAll = styled(Head)`
  background: linear-gradient(135deg, #fafafa 50%, #d4d4d4 50%);
`;

const RowHead = styled.th<{ $on?: boolean }>`
  padding: 0;
  border: solid #e2e2e2;
  border-width: 0 1px 1px 0;
  border-right-color: #c4c4c4;
  font-weight: ${(p) => (p.$on ? 700 : 400)};
  color: ${(p) => (p.$on ? '#1e7145' : '#333')};
  background: ${(p) => (p.$on ? '#ededed' : '#fbfbfb')};
`;

const Cell = styled.td<{ $num?: boolean; $edgeR?: boolean; $edgeB?: boolean }>`
  padding: 0 2px;
  border: solid #d0d0d0;
  border-width: 0 1px 1px 0;
  text-align: ${(p) => (p.$num ? 'right' : 'left')};
  white-space: nowrap;
  ${(p) => p.$edgeR && css`border-right-color: #4a3fd4;`}
  ${(p) => p.$edgeB && css`border-bottom-color: #4a3fd4;`}
  ${(p) => p.$edgeR && p.$edgeB && css`
    background: linear-gradient(135deg, transparent 50%, #2a2590 50%) right bottom / 4px 4px no-repeat;
  `}
`;

const SheetTabs = styled.div`
  display: flex;
  flex: none;
  height: 24px;
  border-top: 1px solid #cfcfcf;
  background: #ededed;
`;

const SheetNav = styled.div`
  display: flex;
  align-items: center;
  gap: 14px;
  width: 59px;
  padding-left: 14px;
`;

const SheetTab = styled.button`
  width: 77px;
  height: 22px;
  margin-top: -1px;
  border: solid #bcbcbc;
  border-width: 0 1px 1px 1px;
  border-radius: 0 0 3px 3px;
  background: #fff;
  font-weight: 700;
  font-size: 12px;
  color: #1e7d45;
`;

const AddSheet = styled.button`
  width: 37px;
  height: 22px;
  border-right: 1px solid #c9c9c9;
  font-size: 18px;
  line-height: 20px;
  color: #555;
`;

const SHEET_TABS = ['Home', 'Insert', 'Draw', 'Page Layout', 'Formulas', 'Data', 'Review', 'View', 'Developer', 'Acrobat'];

const Drop = () => <Plain $w={8} aria-label="Options"><Chevron c="#666" /></Plain>;

const LabelRow = ({ kind, text }: { kind: string; text: string }) => (
  <LabelButton><GridIcon kind={kind} />{text}<Chevron c="#666" /></LabelButton>
);

const AlignGroup = () => (
  <SheetGroup $w={132} $pad={10} $dir="column">
    <Row $gap={2} $h={21}>
      <Plain $w={22} aria-label="Top align"><Lines d="M0 2.500h14M3 6.500h8M0 10.500h14" /></Plain>
      <Plain $w={22} aria-label="Middle align"><Lines d="M0 5.500h14M3 9.500h8M0 13.500h14" /></Plain>
      <Plain $w={22} $on aria-label="Bottom align"><Lines d="M0 6.500h14M3 10.500h8M0 14.500h14" /></Plain>
      <Row><Plain $w={22} aria-label="Wrap text"><WrapIcon /></Plain><Drop /></Row>
    </Row>
    <Row $gap={2} $h={21}>
      <Plain $w={22} aria-label="Align left"><Lines d="M0 2.500h14M0 6.500h9M0 10.500h14M0 14.500h9" /></Plain>
      <Plain $w={22} aria-label="Centre"><Lines d="M0 2.500h14M2.500 6.500h9M0 10.500h14M2.500 14.500h9" /></Plain>
      <Plain $w={22} aria-label="Align right"><Lines d="M0 2.500h14M5 6.500h9M0 10.500h14M5 14.500h9" /></Plain>
      <Row><Plain $w={22} aria-label="Merge"><MergeIcon /></Plain><Drop /></Row>
    </Row>
    <Row $h={21}>
      <Plain $w={22} aria-label="Decrease indent"><IndentIcon out /></Plain>
      <Plain $w={24} aria-label="Increase indent"><IndentIcon /></Plain>
      <Rule $before={7} $after={9} />
      <Row $gap={4}><Plain $w={18} aria-label="Orientation"><OrientIcon /></Plain><Drop /></Row>
      <Rule $before={9} $after={0} />
    </Row>
  </SheetGroup>
);

const WorkbookWindow = () => (
  <Pane $bg="#e4e4e4">
    <TitleBar>
      <QuickAccess>
        <AutoSave $dim>AutoSave<Toggle type="checkbox" /></AutoSave>
        <Plain $w={17} aria-label="Home"><HomeIcon /></Plain>
        <Plain $w={17} aria-label="Save"><SaveIcon c="#b5b5b5" /></Plain>
        <Plain $w={17} aria-label="Save as"><SaveIcon pen /></Plain>
        <Plain $w={16} aria-label="Undo"><UndoIcon /></Plain>
        <Plain $w={8} aria-label="Undo history"><Chevron /></Plain>
        <Plain $w={17} aria-label="Redo"><RedoIcon /></Plain>
        <Plain $w={16} aria-label="Spelling"><SpellIcon /></Plain>
        <Plain $w={16} aria-label="More"><Dots /></Plain>
      </QuickAccess>
      <DocTitle>Chart in Microsoft PowerPoint</DocTitle>
      <TitleEnd>
        <SearchBox $dim><SearchIcon c="#aaa" /><input type="search" placeholder="Search (Cmd + Ctrl + U)" aria-label="Search" /></SearchBox>
        <Plain $w={16} aria-label="Account"><PersonIcon /></Plain>
      </TitleEnd>
    </TitleBar>
    <TabRow>
      <Tabs>
        {SHEET_TABS.map((t) => <Tab key={t} $dim $active={t === 'Home' ? '#1a6b3c' : undefined}>{t}</Tab>)}
      </Tabs>
      <Actions>
        <Action><CommentIcon />Comments</Action>
        <Action><ShareIcon c="#222" />Share<Chevron w={9} /></Action>
      </Actions>
    </TabRow>
    <SheetRibbon>
      <SheetGroup $w={103} $pad={12}>
        <BigButton w={42} art={<PasteArt />} lines={['Paste']} chevron color="#666" />
        <Stack $left={6}>
          <Plain $w={16} $h={22} aria-label="Cut"><CutIcon /></Plain>
          <Row $gap={5}><Plain $w={17} aria-label="Copy"><CopyIcon /></Plain><Drop /></Row>
          <Plain $w={16} $h={22} aria-label="Format painter"><BrushIcon /></Plain>
        </Stack>
      </SheetGroup>
      <SheetGroup $w={263} $pad={10} $dir="column">
        <Row $gap={3} $top={6}>
          <PickerField w={137} value="Calibri (Body)" label="Font" />
          <PickerField w={52} value="12" label="Font size" />
          <Row $gap={5}><Plain $w={26} aria-label="Grow font"><GrowIcon up /></Plain><Plain $w={18} aria-label="Shrink font"><GrowIcon /></Plain></Row>
        </Row>
        <Row $top={8}>
          <Plain $w={24}><Glyph $style="bold">B</Glyph></Plain>
          <Plain $w={24}><Glyph $style="italic">I</Glyph></Plain>
          <Plain $w={28}><Glyph $style="underline">U</Glyph></Plain>
          <Drop />
          <Rule $before={10} $after={10} />
          <Row $gap={7}><Plain $w={16} aria-label="Borders"><BordersIcon /></Plain><Drop /></Row>
          <Rule $before={10} $after={10} />
          <Row $gap={7}>
            <Plain $w={16} aria-label="Fill colour"><FillIcon /></Plain><Drop />
            <Plain $w={16} aria-label="Font colour"><FontColorIcon /></Plain><Drop />
          </Row>
        </Row>
      </SheetGroup>
      <AlignGroup />
      <SheetGroup $w={172} $pad={11} $dir="column">
        <Row $top={6}><PickerField w={150} value="General" label="Number format" /></Row>
        <Row $top={8}>
          <Row $gap={3}><Plain $w={22} aria-label="Currency"><MoneyIcon /></Plain><Drop /></Row>
          <Plain $w={30}><Glyph $size={18}>%</Glyph></Plain>
          <Plain $w={22} aria-label="Comma style"><svg width="9" height="14" viewBox="0 0 9 14" fill="#707070"><path d="M4.500 0a4 4 0 0 1 4 4c0 4-2.500 8-6 10l-.5-1c2-1.500 3-3.500 3-5.200A4 4 0 1 1 4.500 0z" /></svg></Plain>
          <Rule $before={10} $after={9} />
          <Row $gap={8}><Plain $w={17} aria-label="Increase decimal"><DecimalIcon inc /></Plain><Plain $w={17} aria-label="Decrease decimal"><DecimalIcon /></Plain></Row>
        </Row>
      </SheetGroup>
      <SheetGroup $w={173} $pad={12} $dir="column">
        <LabelRow kind="cond" text="Conditional Formatting" />
        <LabelRow kind="table" text="Format as Table" />
        <LabelRow kind="styles" text="Cell Styles" />
      </SheetGroup>
      <SheetGroup $w={94} $pad={11} $dir="column">
        <LabelRow kind="insert" text="Insert" />
        <LabelRow kind="delete" text="Delete" />
        <LabelRow kind="format" text="Format" />
      </SheetGroup>
      <SheetGroup $w={152} $pad={12}>
        <Stack>
          <Row $gap={5}><Plain $w={16} aria-label="AutoSum"><SumIcon /></Plain><Drop /></Row>
          <Row $gap={5}><Plain $w={16} aria-label="Fill"><FillDownIcon /></Plain><Drop /></Row>
          <Row $gap={5}><Plain $w={16} aria-label="Clear"><EraserIcon /></Plain><Drop /></Row>
        </Stack>
        <Stack $left={4}><BigButton w={46} art={<SortArt />} lines={['Sort &', 'Filter']} chevron color="#666" /></Stack>
        <Stack $left={2}><BigButton w={46} art={<FindArt />} lines={['Find &', 'Select']} chevron color="#666" /></Stack>
      </SheetGroup>
      <SheetGroup $w={63} $pad={3}><BigButton w={54} art={<AnalyseArt />} lines={['Analyse', 'Data']} color="#666" /></SheetGroup>
      <SheetGroup $pad={7}><BigButton w={76} art={<PdfArt />} lines={['Create PDF', 'and share link']} color="#666" /></SheetGroup>
    </SheetRibbon>
    <FormulaBar>
      <NameBox>
        <input defaultValue="A6" aria-label="Name box" />
        <svg width="9" height="18" viewBox="0 0 9 18" fill="#888"><path d="M1 6l3.500-6L8 6zM1 12l3.500 6L8 12z" /></svg>
      </NameBox>
      <FormulaTools>
        <Plain $w={12} aria-label="Cancel"><Ico w={11} h={11} stroke="#c2c2c2"><path d="M1 1l9 9M10 1l-9 9" strokeWidth="2" /></Ico></Plain>
        <Plain $w={14} aria-label="Enter"><Ico w={14} h={11} stroke="#c2c2c2"><path d="M1 6l4 4 8-9" strokeWidth="2" /></Ico></Plain>
        <Plain $w={14} aria-label="Insert function"><FxGlyph>fx</FxGlyph></Plain>
      </FormulaTools>
      <FormulaInput defaultValue="Column1" aria-label="Formula" />
      <DownMark>▼</DownMark>
    </FormulaBar>
    <SheetArea>
      <Grid>
        <colgroup><col />{COLUMNS.map((c) => <col key={c} className="letter" />)}<col /></colgroup>
        <thead>
          <tr><SelectAll />{COLUMNS.map((c) => <Head key={c} $on={c === 'A'}>{c}</Head>)}<Head /></tr>
        </thead>
        <tbody>
          {Array.from({ length: ROW_COUNT }, (_, i) => i + 1).map((row) => (
            <tr key={row}>
              <RowHead $on={row === 6}>{row}</RowHead>
              {[...COLUMNS, ''].map((c, col) => (
                <Cell key={col} $num={row > 1 && col > 0} $edgeR={col === 3 && row < 6} $edgeB={col < 4 && row === 5}>{cellAt(row, col)}</Cell>
              ))}
            </tr>
          ))}
        </tbody>
      </Grid>
    </SheetArea>
    <SheetTabs>
      <SheetNav>
        <Plain $w={8} aria-label="Previous sheet"><svg width="8" height="10" viewBox="0 0 8 10" fill="#b3b3b3"><path d="M8 0v10L0 5z" /></svg></Plain>
        <Plain $w={8} aria-label="Next sheet"><svg width="8" height="10" viewBox="0 0 8 10" fill="#b3b3b3"><path d="M0 0v10l8-5z" /></svg></Plain>
      </SheetNav>
      <SheetTab>Sheet1</SheetTab>
      <AddSheet aria-label="Add sheet">+</AddSheet>
    </SheetTabs>
    <StatusBar>
      <StatusSide $gap={19}>
        <span>Ready</span>
        <Plain $w={14} aria-label="Record macro"><Ico w={14} h={14}><circle cx="2.500" cy="2.500" r="2" fill="#555" /><path d="M5 2h8.500v3M11 2v10.500H1V11M4 5v7" strokeWidth="1.500" /></Ico></Plain>
        <StatusItem><A11yIcon ok />Accessibility: Good to go</StatusItem>
      </StatusSide>
      <StatusSide $gap={0}>
        <ViewButton $on aria-label="Normal"><svg width="14" height="13" viewBox="0 0 14 13" fill="#fff"><path d="M0 0h4v3.500H0zM5 0h4v3.500H5zM10 0h4v3.500h-4zM0 4.700h4v3.500H0zM5 4.700h4v3.500H5zM10 4.700h4v3.500h-4zM0 9.400h4V13H0zM5 9.400h4V13H5zM10 9.400h4V13h-4z" /></svg></ViewButton>
        <ViewButton aria-label="Page layout"><Ico w={14} h={14}><path d="M1 1h12v12H1zM3.500 1v10h7V1M5.500 4h3M5.500 6h3M5.500 8h3" strokeWidth="1.400" /></Ico></ViewButton>
        <ViewButton aria-label="Page breaks"><Ico w={14} h={14}><path d="M1 1h12v12H1zM1 8h8V1M5 1v7" strokeWidth="1.400" /></Ico></ViewButton>
        <ZoomEnd>
          <ZoomControl value={49} />
          <Percent>100%</Percent>
        </ZoomEnd>
      </StatusSide>
    </StatusBar>
  </Pane>
);

export default function App() {
  return (
    <>
      <GlobalStyle />
      <Screen>
        <SlidesWindow />
        <Divider />
        <WorkbookWindow />
      </Screen>
    </>
  );
}
